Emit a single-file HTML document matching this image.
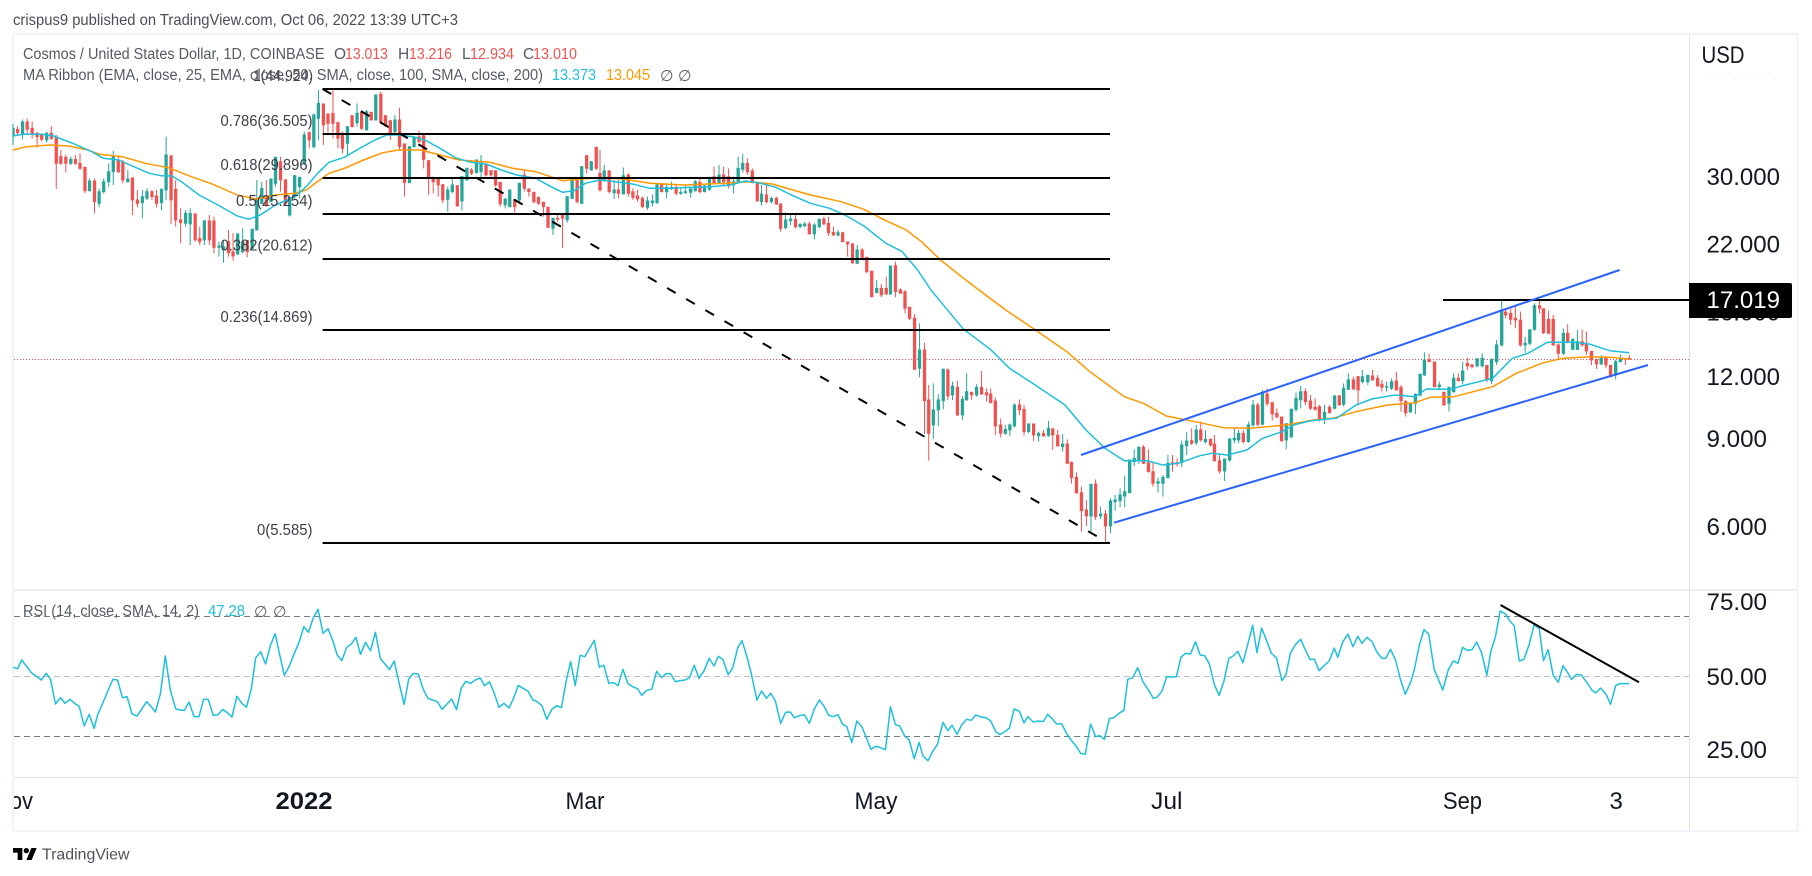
<!DOCTYPE html>
<html lang="en">
<head>
<meta charset="utf-8">
<title>Cosmos / United States Dollar chart</title>
<style>
html,body{margin:0;padding:0;background:#fff;width:1812px;height:876px;overflow:hidden}
svg{display:block}
text{font-family:"Liberation Sans",sans-serif}
.r{fill:#ef5350;stroke:#ef5350;stroke-width:2.6}
.g{fill:#26a69a;stroke:#26a69a;stroke-width:2.6}
.ln{fill:none;stroke-linejoin:round}
.rsi{fill:none;stroke:#1fbfdc;stroke-width:1.5;vector-effect:non-scaling-stroke;stroke-linejoin:round}
.fib{font-size:15.5px;fill:#3c3f47}
.leg{font-size:15.5px;fill:#555963}
.ax{font-size:24.5px;fill:#131722}
.tm{font-size:24px;fill:#131722}
</style>
</head>
<body>
<svg width="1812" height="876" viewBox="0 0 1812 876" xmlns="http://www.w3.org/2000/svg">
<defs><clipPath id="c1"><rect x="14" y="780" width="300" height="50"/></clipPath></defs>
<rect width="1812" height="876" fill="#fff"/>
<text x="13" y="25" font-size="16" fill="#4a4d55" textLength="445" lengthAdjust="spacingAndGlyphs">crispus9 published on TradingView.com, Oct 06, 2022 13:39 UTC+3</text>

<!-- frame -->
<rect x="13" y="34" width="1784.5" height="797" fill="none" stroke="#f0f3fa" stroke-width="2"/>
<path d="M14 590H1797" stroke="#e6e9f0" stroke-width="1.6"/>
<path d="M14 777.5H1797" stroke="#e0e3eb" stroke-width="1.2"/>
<path d="M1689.5 35V830" stroke="#e0e3eb" stroke-width="1"/>
<path d="M1708 73H1777" stroke="#f0f3fa" stroke-dasharray="3 7"/>

<!-- last price -->
<path d="M14 359.5H1689" stroke="#ef5350" stroke-dasharray="1 2" stroke-width="1"/>

<!-- candles A -->
<g transform="scale(.3827 .3333)">
<path class="r" d="M46 378V405M46 388h3V398h-6V388zM71 355V400M71 366h3V388h-6V366zM84 365V415M84 385h3V402h-6V385zM97 395V442M97 400h3V410h-6V400zM109 400V425M109 405h3V418h-6V405zM134 378V420M134 400h3V415h-6V400zM147 405V567M147 412h3V490h-6V412zM159 450V495M159 470h3V490h-6V470zM172 465V518M172 472h3V490h-6V472zM197 465V495M197 478h3V490h-6V478zM209 460V510M209 490h3V505h-6V490zM222 500V580M222 502h3V572h-6V502zM247 535V640M247 543h3V605h-6V543zM309 468V520M309 482h3V515h-6V482zM321 480V550M321 485h3V540h-6V485zM346 532V645M346 534h3V600h-6V534zM359 570V622M359 600h3V610h-6V600zM397 570V600M397 575h3V590h-6V575zM409 570V622M409 588h3V610h-6V588zM447 465V672M447 468h3V600h-6V468zM459 540V680M459 568h3V660h-6V568zM472 625V730M472 660h3V668h-6V660zM510 640V725M510 642h3V720h-6V642zM522 680V735M522 715h3V725h-6V715zM547 645V735M547 663h3V720h-6V663zM559 650V760M559 663h3V742h-6V663zM597 690V770M597 725h3V758h-6V725zM609 700V782M609 755h3V768h-6V755zM646 720V772M646 722h3V755h-6V722zM696 540V620M696 590h3V615h-6V590zM733 470V575M733 485h3V540h-6V485zM746 537V615M746 540h3V610h-6V540zM808 395V445M808 398h3V420h-6V398zM845 310V435M845 312h3V375h-6V312zM857 340V398M857 342h3V370h-6V342zM870 268V415M870 340h3V370h-6V340zM883 365V445M883 368h3V415h-6V368zM895 395V460M895 400h3V445h-6V400zM920 345V382M920 347h3V380h-6V347zM945 335V390M945 337h3V385h-6V337zM970 335V362M970 337h3V360h-6V337zM995 275V367M995 283h3V365h-6V283zM1007 345V380M1007 347h3V378h-6V347zM1020 360V420M1020 362h3V405h-6V362zM1044 323V450M1044 360h3V440h-6V360zM1057 430V590M1057 432h3V548h-6V432zM1095 392V428M1095 410h3V425h-6V410zM1107 405V505M1107 407h3V478h-6V407zM1120 480V585M1120 482h3V530h-6V482zM1132 530V580M1132 532h3V545h-6V532zM1145 535V590M1145 537h3V555h-6V537zM1157 552V610M1157 554h3V600h-6V554zM1195 555V620M1195 557h3V618h-6V557zM1232 505V525M1232 510h3V520h-6V510zM1270 490V530M1270 492h3V525h-6V492zM1283 510V530M1283 512h3V525h-6V512zM1295 510V560M1295 512h3V555h-6V512zM1307 545V620M1307 547h3V612h-6V547zM1345 597V638M1345 599h3V620h-6V599zM1370 510V575M1370 525h3V565h-6V525zM1382 565V590M1382 567h3V575h-6V567zM1395 575V610M1395 577h3V605h-6V577zM1407 590V615M1407 592h3V610h-6V592zM1420 605V650M1420 607h3V620h-6V607zM1432 620V685M1432 622h3V682h-6V622zM1457 640V665M1457 655h3V658h-6V655zM1470 640V745M1470 642h3V655h-6V642zM1508 535V610M1508 537h3V605h-6V537zM1533 465V520M1533 467h3V505h-6V467zM1558 440V510M1558 442h3V505h-6V442z"/>
<path class="g" d="M34 372V435M34 385h3V408h-3V385zM59 358V418M59 366h3V400h-6V366zM122 395V428M122 400h3V420h-6V400zM185 470V495M185 478h3V490h-6V478zM234 535V575M234 543h3V572h-6V543zM259 565V622M259 575h3V610h-6V575zM271 535V580M271 545h3V575h-6V545zM284 490V560M284 515h3V545h-6V515zM296 452V555M296 470h3V515h-6V470zM334 510V548M334 537h3V545h-6V537zM372 570V655M372 590h3V608h-6V590zM384 565V600M384 575h3V595h-6V575zM422 565V630M422 568h3V608h-6V568zM434 410V600M434 465h3V570h-6V465zM485 630V680M485 640h3V670h-6V640zM497 625V735M497 640h3V672h-6V640zM534 660V735M534 663h3V720h-6V663zM572 725V770M572 738h3V742h-6V738zM584 720V788M584 740h3V750h-6V740zM621 700V765M621 702h3V762h-6V702zM634 685V760M634 725h3V755h-6V725zM659 685V750M659 688h3V745h-6V688zM671 540V692M671 595h3V690h-6V595zM684 545V612M684 565h3V610h-6V565zM708 535V607M708 537h3V605h-6V537zM720 470V560M720 472h3V550h-6V472zM757 590V650M757 592h3V645h-6V592zM770 525V600M770 527h3V590h-6V527zM783 530V595M783 532h3V560h-6V532zM795 395V495M795 405h3V490h-6V405zM820 340V445M820 345h3V440h-6V345zM832 270V420M832 310h3V355h-6V310zM908 378V465M908 380h3V430h-6V380zM933 310V380M933 340h3V368h-6V340zM958 330V392M958 335h3V390h-6V335zM982 283V362M982 285h3V360h-6V285zM1032 345V400M1032 360h3V395h-6V360zM1070 438V550M1070 440h3V548h-6V440zM1082 410V442M1082 412h3V440h-6V412zM1170 560V635M1170 570h3V598h-6V570zM1182 535V580M1182 555h3V575h-6V555zM1207 528V632M1207 530h3V603h-6V530zM1220 503V542M1220 505h3V540h-6V505zM1245 478V520M1245 480h3V518h-6V480zM1257 465V535M1257 490h3V515h-6V490zM1320 595V625M1320 597h3V615h-6V597zM1332 568V622M1332 570h3V620h-6V570zM1357 548V605M1357 550h3V600h-6V550zM1445 653V705M1445 655h3V685h-6V655zM1482 588V668M1482 590h3V660h-6V590zM1495 533V597M1495 535h3V595h-6V535zM1520 498V612M1520 500h3V610h-6V500zM1545 483V512M1545 485h3V510h-6V485z"/>
</g>
<!-- candles B -->
<g transform="translate(600 0) scale(.3827 .3333)">
<path class="r" d="M0 450V575M0 520h3V570h-6V520zM24 510V580M24 513h3V575h-6V513zM48 540V595M48 570h3V580h-6V570zM74 520V590M74 525h3V580h-6V525zM86 565V600M86 575h3V592h-6V575zM98 570V605M98 588h3V597h-6V588zM111 590V625M111 595h3V620h-6V595zM161 552V577M161 555h3V575h-6V555zM199 555V587M199 562h3V580h-6V562zM261 530V580M261 547h3V575h-6V547zM298 500V550M298 530h3V548h-6V530zM323 500V555M323 525h3V545h-6V525zM336 505V565M336 530h3V557h-6V530zM385 475V525M385 490h3V515h-6V490zM398 505V550M398 513h3V548h-6V513zM411 545V605M411 547h3V603h-6V547zM435 552V610M435 585h3V605h-6V585zM461 590V615M461 595h3V612h-6V595zM472 610V695M472 612h3V685h-6V612zM511 645V685M511 658h3V680h-6V658zM547 665V703M547 672h3V702h-6V672zM585 650V675M585 657h3V672h-6V657zM597 650V708M597 670h3V698h-6V670zM610 680V708M610 697h3V705h-6V697zM634 695V727M634 698h3V725h-6V698zM647 725V770M647 726h3V732h-6V726zM660 730V793M660 732h3V788h-6V732zM685 745V775M685 750h3V772h-6V750zM697 770V820M697 772h3V815h-6V772zM710 812V892M710 814h3V890h-6V814zM735 852V892M735 865h3V885h-6V865zM748 830V885M748 865h3V882h-6V865zM772 785V892M772 797h3V875h-6V797zM785 865V880M785 870h3V880h-6V870z"/>
<path class="g" d="M11 495V545M11 513h3V540h-6V513zM37 540V597M37 570h3V578h-6V570zM61 502V584M61 527h3V582h-6V527zM124 590V630M124 603h3V622h-6V603zM137 583V620M137 603h3V608h-6V603zM149 550V612M149 555h3V608h-6V555zM174 555V595M174 562h3V575h-6V562zM187 545V570M187 562h3V566h-6V562zM211 565V585M211 577h3V580h-6V577zM223 555V582M223 575h3V578h-6V575zM237 560V593M237 567h3V577h-6V567zM249 540V575M249 545h3V572h-6V545zM273 555V577M273 558h3V575h-6V558zM286 530V572M286 532h3V568h-6V532zM311 495V552M311 525h3V548h-6V525zM349 530V580M349 545h3V555h-6V545zM361 470V550M361 505h3V548h-6V505zM373 462V518M373 490h3V508h-6V490zM422 555V617M422 582h3V605h-6V582zM448 590V610M448 595h3V605h-6V595zM485 637V687M485 660h3V683h-6V660zM498 645V675M498 657h3V662h-6V657zM523 670V685M523 673h3V680h-6V673zM535 665V682M535 672h3V677h-6V672zM560 670V718M560 675h3V702h-6V675zM573 655V685M573 658h3V680h-6V658zM622 690V710M622 698h3V705h-6V698zM672 735V792M672 750h3V790h-6V750zM723 840V880M723 865h3V878h-6V865zM759 797V885M759 798h3V882h-6V798z"/>
</g>
<!-- candles C -->
<g transform="translate(600 290) scale(.3827 .3333)">
<path class="r" d="M797 0V70M797 5h3V55h-6V5zM809 50V90M809 52h3V85h-6V52zM822 72V240M822 84h3V238h-6V84zM848 158V432M848 180h3V332h-6V180zM859 285V512M859 330h3V430h-6V330zM909 235V330M909 240h3V318h-6V240zM934 272V378M934 292h3V375h-6V292zM971 305V330M971 307h3V315h-6V307zM997 243V315M997 292h3V312h-6V292zM1010 295V335M1010 308h3V315h-6V308zM1021 295V340M1021 312h3V338h-6V312zM1033 322V435M1033 333h3V408h-6V333zM1047 385V443M1047 405h3V430h-6V405zM1096 328V375M1096 345h3V360h-6V345zM1108 345V437M1108 358h3V425h-6V358zM1133 400V452M1133 402h3V435h-6V402zM1159 420V440M1159 430h3V438h-6V430zM1183 415V480M1183 416h3V435h-6V416zM1196 420V470M1196 436h3V468h-6V436zM1221 448V523M1221 462h3V520h-6V462zM1232 515V580M1232 517h3V563h-6V517zM1245 547V612M1245 562h3V608h-6V562zM1258 590V725M1258 608h3V662h-6V608zM1271 630V708M1271 660h3V678h-6V660zM1295 568V690M1295 582h3V680h-6V582zM1321 660V757M1321 672h3V708h-6V672zM1420 465V522M1420 472h3V520h-6V472zM1433 478V548M1433 518h3V545h-6V518zM1445 515V590M1445 545h3V580h-6V545zM1496 495V545M1496 518h3V523h-6V518zM1508 505V530M1508 518h3V522h-6V518zM1546 415V465M1546 452h3V460h-6V452z"/>
<path class="g" d="M835 100V262M835 180h3V235h-6V180zM871 280V447M871 360h3V405h-6V360zM884 312V408M884 330h3V360h-6V330zM897 235V358M897 238h3V332h-6V238zM921 275V330M921 288h3V315h-6V288zM947 318V390M947 328h3V375h-6V328zM958 250V332M958 305h3V330h-6V305zM984 283V320M984 292h3V315h-6V292zM1059 405V435M1059 418h3V430h-6V418zM1071 400V438M1071 405h3V420h-6V405zM1083 340V412M1083 345h3V408h-6V345zM1120 400V430M1120 402h3V425h-6V402zM1146 425V455M1146 430h3V437h-6V430zM1172 393V440M1172 415h3V437h-6V415zM1209 432V485M1209 462h3V470h-6V462zM1283 582V725M1283 583h3V678h-6V583zM1308 650V688M1308 672h3V678h-6V672zM1334 625V730M1334 633h3V708h-6V633zM1346 615V662M1346 630h3V635h-6V630zM1359 595V652M1359 615h3V632h-6V615zM1371 558V652M1371 605h3V618h-6V605zM1384 508V610M1384 510h3V608h-6V510zM1396 478V528M1396 505h3V515h-6V505zM1408 468V522M1408 472h3V510h-6V472zM1458 562V608M1458 575h3V580h-6V575zM1471 555V620M1471 562h3V580h-6V562zM1484 495V565M1484 520h3V563h-6V520zM1520 452V532M1520 465h3V518h-6V465zM1533 427V495M1533 453h3V467h-6V453zM1558 405V465M1558 420h3V458h-6V420z"/>
</g>
<!-- candles D -->
<g transform="translate(1200 290) scale(.3903 .3333)">
<path class="r" d="M2 395V455M2 420h3V450h-6V420zM27 445V470M27 448h3V465h-6V448zM37 435V515M37 462h3V512h-6V462zM50 490V550M50 512h3V543h-6V512zM111 420V460M111 430h3V455h-6V430zM148 338V408M148 345h3V403h-6V345zM172 295V348M172 312h3V340h-6V312zM185 335V392M185 338h3V372h-6V338zM197 355V385M197 370h3V380h-6V370zM209 380V455M209 381h3V452h-6V381zM270 295V345M270 305h3V335h-6V305zM283 315V360M283 333h3V355h-6V333zM295 325V362M295 352h3V358h-6V352zM306 345V395M306 350h3V390h-6V350zM332 345V370M332 352h3V368h-6V352zM357 315V347M357 318h3V345h-6V318zM393 260V300M393 270h3V297h-6V270zM405 258V343M405 260h3V300h-6V260zM442 240V272M442 258h3V270h-6V258zM455 255V290M455 265h3V288h-6V265zM466 270V305M466 283h3V292h-6V283zM503 245V302M503 273h3V300h-6V273zM515 285V365M515 292h3V332h-6V292zM527 330V380M527 335h3V368h-6V335zM587 190V217M587 210h3V215h-6V210zM601 215V292M601 216h3V290h-6V216zM625 305V348M625 307h3V345h-6V307zM662 250V275M662 265h3V272h-6V265zM685 203V240M685 220h3V228h-6V220zM697 222V235M697 225h3V230h-6V225zM735 225V275M735 226h3V270h-6V226zM783 55V85M783 66h3V75h-6V66zM796 55V105M796 70h3V88h-6V70zM808 50V115M808 85h3V90h-6V85zM821 65V170M821 90h3V165h-6V90zM870 32V70M870 47h3V55h-6V47zM880 55V132M880 56h3V128h-6V56zM893 62V132M893 88h3V130h-6V88zM905 75V168M905 88h3V165h-6V88zM918 160V210M918 165h3V190h-6V165zM942 103V160M942 130h3V155h-6V130zM979 118V170M979 155h3V165h-6V155zM990 125V195M990 160h3V183h-6V160zM1003 183V225M1003 184h3V210h-6V184zM1016 205V237M1016 210h3V222h-6V210zM1040 200V235M1040 203h3V225h-6V203zM1052 225V262M1052 226h3V260h-6V226zM1090 205V225M1090 205h3V208h-6V205zM1100 195V210M1100 205h3V207h-6V205z"/>
<path class="g" d="M14 420V460M14 448h3V455h-6V448zM63 505V573M63 507h3V543h-6V507zM76 445V515M76 447h3V510h-6V447zM88 412V460M88 445h3V450h-6V445zM99 420V460M99 430h3V450h-6V430zM124 395V458M124 405h3V455h-6V405zM136 330V410M136 345h3V405h-6V345zM160 300V405M160 308h3V403h-6V308zM221 400V478M221 401h3V450h-6V401zM234 355V445M234 358h3V440h-6V358zM246 308V365M246 325h3V358h-6V325zM258 288V355M258 305h3V330h-6V305zM319 345V402M319 367h3V388h-6V367zM345 315V358M345 318h3V355h-6V318zM368 280V350M368 295h3V343h-6V295zM380 250V300M380 270h3V298h-6V270zM416 240V280M416 260h3V275h-6V260zM430 255V285M430 256h3V275h-6V256zM478 275V305M478 290h3V292h-6V290zM491 265V300M491 275h3V295h-6V275zM539 338V368M539 339h3V366h-6V339zM552 310V372M552 313h3V340h-6V313zM564 250V320M564 253h3V315h-6V253zM575 187V258M575 210h3V255h-6V210zM613 275V300M613 285h3V290h-6V285zM638 290V365M638 292h3V340h-6V292zM650 250V308M650 265h3V305h-6V265zM673 215V283M673 243h3V272h-6V243zM710 205V232M710 206h3V228h-6V206zM723 190V232M723 205h3V228h-6V205zM747 205V283M747 208h3V272h-6V208zM760 150V225M760 165h3V215h-6V165zM773 28V170M773 60h3V165h-6V60zM833 140V188M833 160h3V165h-6V160zM845 118V165M845 119h3V160h-6V119zM857 40V122M857 47h3V118h-6V47zM931 115V195M931 130h3V190h-6V130zM955 145V180M955 148h3V178h-6V148zM967 120V180M967 155h3V178h-6V155zM1028 195V225M1028 205h3V222h-6V205zM1065 210V268M1065 215h3V255h-6V215zM1077 193V218M1077 205h3V215h-6V205z"/>
</g>

<!-- MA ribbon -->
<path class="ln" stroke="#ff9800" stroke-width="1.5" d="M13 150L26.8 146.7L49.8 145L68.9 146L88 150L99.5 154.3L122.5 156.7L145.4 163.3L168.4 167.7L191.4 176.7L210.5 183.3L237.3 195L256.4 199L275.5 195L294.7 193.3L306.2 190L329 173.3L344.4 168.3L363.6 160L382.7 152.7L398 150L421 150L440 155L459.2 160L489.9 162.3L512.8 168.3L535.8 171.7L562.6 180.7L581.7 179L600 177.7L623 179L649.8 183.3L684.2 185L726.3 183.3L749.3 181.7L772.2 184L810.5 195L841 201.7L864 209.3L883.2 219.3L906.2 230L921.5 241.7L940.6 260L963.6 278.3L978.9 290L1005.7 310L1034.4 329.3L1066.9 351.7L1089.9 371.7L1124.3 396.7L1143.4 403.3L1166.4 416L1200 422.7L1223.4 427.7L1250.7 428.3L1285.9 425L1313.2 420L1332.7 418.3L1356 411.7L1387.4 405L1414.7 402.7L1430.3 397.3L1453.7 396.7L1492.7 386.7L1516.2 373.3L1543.5 362.7L1563 358.3L1590.3 356.7L1609.8 357.3L1629.4 359"/>
<path class="ln" stroke="#1fbfdc" stroke-width="1.5" d="M13 136L23 134.3L42 134.3L53.6 136L72.7 143.3L91.8 151.7L103.3 158.3L118.6 160L130 165L149.3 173.3L160.7 175.7L172.2 176L183.7 183.3L199 195L218 205L237.3 216L248.8 219.3L260.2 215L275.5 205L294.7 196.7L306.2 186.7L317.6 173.3L329 162.3L344.4 157.3L359.7 148.3L375 140L386.5 135L398 135L413.3 136.7L424.8 140L440 148.3L455.4 157.7L470.7 162.3L486 164L501.3 170L516.6 175L535.8 178.3L551 186.7L562.6 192.3L574 190.7L585.5 183.3L600 180L615.3 181.7L632.5 184L649.8 188.3L668.9 188.3L691.8 187.3L711 186.7L730 185L745.4 181L760.7 183.3L776 187.3L791.3 195L810.5 203.3L829.6 208.3L845 215L864 226L885 242.7L902.3 251.7L917.6 270L931 290L940.6 301.7L963.6 329.3L990.4 349.3L1009.5 368.3L1032.5 383.3L1065 405L1086 430L1105 448.3L1124.3 460.7L1133.9 460.7L1147.3 460.7L1162.6 465L1178 463.3L1200 455.7L1211.7 453.3L1227.3 455L1246.8 450L1262.5 438.3L1282 431.7L1293.7 425L1309.3 421L1325 419.3L1336.6 418.3L1356 405L1371.7 399L1395 395L1414.7 396.7L1426.4 389L1449.8 389.3L1465.4 385L1492.7 378.3L1512.3 358.3L1527.9 353.3L1547.4 342.3L1574.7 342.3L1590.3 344.3L1609.8 350.7L1629.4 352.7"/>

<!-- drawings: fib -->
<g stroke="#000" stroke-width="2" fill="none">
<path d="M322.6 89H1110M322.6 134H1110M322.6 178H1110M322.6 214H1110M322.6 259H1110M322.6 330H1110M322.6 543H1110"/>
<path d="M322.6 89L1108 542.7" stroke-dasharray="10 12.1"/>
<path d="M1443 300H1689"/>
</g>
<g stroke="#2962ff" stroke-width="2" fill="none">
<path d="M1081 455L1619.6 270"/>
<path d="M1114 522.7L1648 365"/>
</g>

<!-- fib labels -->
<text class="fib" x="253" y="81" textLength="60" lengthAdjust="spacingAndGlyphs">1(44.924)</text>
<text class="fib" x="220.5" y="126" textLength="92" lengthAdjust="spacingAndGlyphs">0.786(36.505)</text>
<text class="fib" x="220.5" y="170" textLength="92" lengthAdjust="spacingAndGlyphs">0.618(29.896)</text>
<text class="fib" x="236" y="206" textLength="76.500" lengthAdjust="spacingAndGlyphs">0.5(25.254)</text>
<text class="fib" x="220.5" y="250.500" textLength="92" lengthAdjust="spacingAndGlyphs">0.382(20.612)</text>
<text class="fib" x="220.5" y="322" textLength="92" lengthAdjust="spacingAndGlyphs">0.236(14.869)</text>
<text class="fib" x="257" y="535" textLength="55.500" lengthAdjust="spacingAndGlyphs">0(5.585)</text>

<!-- legend -->
<text class="leg" x="23" y="59" textLength="301.500" lengthAdjust="spacingAndGlyphs">Cosmos / United States Dollar, 1D, COINBASE</text>
<text class="leg" x="334" y="59">O</text><text x="345" y="59" font-size="15.5" fill="#ef5350" textLength="43" lengthAdjust="spacingAndGlyphs">13.013</text>
<text class="leg" x="398" y="59">H</text><text x="409" y="59" font-size="15.5" fill="#ef5350" textLength="43" lengthAdjust="spacingAndGlyphs">13.216</text>
<text class="leg" x="462" y="59">L</text><text x="470" y="59" font-size="15.5" fill="#ef5350" textLength="44" lengthAdjust="spacingAndGlyphs">12.934</text>
<text class="leg" x="523" y="59">C</text><text x="533" y="59" font-size="15.5" fill="#ef5350" textLength="44" lengthAdjust="spacingAndGlyphs">13.010</text>
<text class="leg" x="23" y="80" textLength="520" lengthAdjust="spacingAndGlyphs">MA Ribbon (EMA, close, 25, EMA, close, 50, SMA, close, 100, SMA, close, 200)</text>
<text x="552" y="80" font-size="15.5" fill="#1fbfdc" textLength="44" lengthAdjust="spacingAndGlyphs">13.373</text>
<text x="606" y="80" font-size="15.5" fill="#ff9800" textLength="44" lengthAdjust="spacingAndGlyphs">13.045</text>
<text class="leg" x="660" y="81">∅</text><text class="leg" x="678" y="81">∅</text>

<!-- RSI -->
<path d="M14 616.5H1689M14 736.5H1689" stroke="#787b86" stroke-dasharray="6 4" stroke-width="1"/>
<path d="M14 676.5H1689" stroke="#bcbec4" stroke-dasharray="6 4" stroke-width="1"/>
<g transform="translate(0 590) scale(.3827 .3333)">
<polyline class="rsi" points="34,232 46,236 57,210 70,230 82,248 96,260 108,270 121,250 132,268 145,342 158,323 170,340 183,328 195,340 207,349 220,408 233,373 246,415 255,375 270,335 283,300 295,268 307,270 320,323 332,320 345,372 358,378 370,358 383,335 395,350 406,366 419,312 432,198 445,300 459,356 470,360 482,361 494,336 507,380 520,380 532,328 544,328 557,376 570,374 582,358 594,368 606,381 619,319 632,340 644,352 657,295 668,204 681,185 694,222 707,165 719,131 731,195 743,256 756,228 768,193 781,158 794,110 806,127 818,85 831,58 844,130 857,116 869,150 881,195 893,212 906,172 918,162 930,142 942,193 955,157 968,182 981,127 994,206 1006,222 1018,239 1030,213 1043,280 1056,343 1068,267 1080,250 1093,252 1106,298 1118,325 1130,330 1143,335 1155,358 1168,342 1180,327 1193,359 1205,295 1217,274 1230,280 1242,270 1255,264 1266,287 1279,276 1291,308 1304,352 1317,340 1330,354 1342,325 1354,286 1367,295 1380,304 1392,329 1404,335 1416,347 1429,388 1442,358 1455,347 1467,353 1480,270 1491,215 1503,287 1516,196 1528,200 1553,151 1566,232 1568,230"/>
</g>
<g transform="translate(600 590) scale(.3827 .3333)">
<polyline class="rsi" points="0,230 10,226 23,280 35,278 47,287 60,238 73,281 85,290 98,296 109,316 122,301 135,298 148,244 161,263 172,251 184,251 197,275 210,272 222,270 234,263 246,226 259,265 272,242 285,205 298,228 309,199 321,208 335,254 347,233 360,173 371,152 384,200 395,250 410,330 422,303 435,325 446,310 458,332 472,400 485,367 497,366 508,383 521,377 534,374 547,400 560,357 573,330 585,348 597,375 609,380 622,374 634,403 645,410 658,458 671,393 684,410 695,440 708,478 721,469 733,473 746,479 759,350 772,404 783,408 796,438 808,450 821,506 834,457 844,498 857,512 870,483 882,463 896,397 909,422 920,406 933,433 946,403 958,388 970,391 982,375 995,381 1008,383 1021,393 1034,425 1045,434 1058,425 1070,414 1082,357 1096,364 1108,399 1118,380 1132,396 1145,393 1158,395 1170,373 1182,387 1193,402 1206,401 1219,430 1232,452 1245,470 1256,490 1268,493 1282,402 1295,440 1306,437 1318,448 1331,386 1343,383 1356,370 1369,361 1379,268 1392,263 1405,233 1419,276 1432,298 1446,325 1455,322 1468,304 1481,260 1494,261 1506,260 1518,202 1530,190 1543,192 1556,155 1568,195"/>
</g>
<g transform="translate(1200 590) scale(.3903 .3333)">
<polyline class="rsi" points="0,195 12,197 24,222 37,285 49,316 61,275 74,205 85,198 97,184 110,218 122,165 135,106 146,188 158,114 170,150 183,190 196,204 210,272 220,255 232,188 245,163 258,148 270,180 282,209 293,207 305,242 317,228 331,213 344,174 353,202 366,155 379,133 392,170 404,139 415,160 428,142 441,155 453,186 466,205 476,205 488,178 501,210 514,270 526,313 540,275 549,240 562,165 574,119 586,133 600,238 622,300 636,240 649,213 661,220 673,172 685,181 697,179 709,156 722,190 735,256 745,185 757,140 769,63 783,72 795,95 805,107 818,213 830,208 843,165 856,105 869,115 880,212 892,179 905,256 918,277 930,227 942,248 952,268 965,253 977,255 990,276 1004,300 1014,309 1026,294 1040,312 1052,343 1065,287 1075,281 1100,281"/>
</g>
<path d="M1500.5 605L1639 682.3" stroke="#000" stroke-width="2" fill="none"/>
<text class="leg" x="23" y="616" textLength="176" lengthAdjust="spacingAndGlyphs">RSI (14, close, SMA, 14, 2)</text>
<text x="208" y="616" font-size="15.5" fill="#1fbfdc" textLength="37" lengthAdjust="spacingAndGlyphs">47.28</text>
<text class="leg" x="254" y="617">∅</text><text class="leg" x="273" y="617">∅</text>

<!-- price axis -->
<text class="ax" x="1701.5" y="63" textLength="43" lengthAdjust="spacingAndGlyphs">USD</text>
<text class="ax" x="1706.5" y="185" textLength="73.500" lengthAdjust="spacingAndGlyphs">30.000</text>
<text class="ax" x="1706.5" y="252.500" textLength="73.500" lengthAdjust="spacingAndGlyphs">22.000</text>
<text class="ax" x="1706.5" y="320.500" textLength="73.500" lengthAdjust="spacingAndGlyphs">16.000</text>
<path d="M1689 283H1790a2 2 0 0 1 2 2V316a2 2 0 0 1-2 2H1689z" fill="#000"/>
<text x="1706.5" y="308" font-size="24.5" fill="#fff" textLength="73.500" lengthAdjust="spacingAndGlyphs">17.019</text>
<text class="ax" x="1706.5" y="385" textLength="73.500" lengthAdjust="spacingAndGlyphs">12.000</text>
<text class="ax" x="1706.5" y="447" textLength="60.500" lengthAdjust="spacingAndGlyphs">9.000</text>
<text class="ax" x="1706.5" y="535" textLength="60.500" lengthAdjust="spacingAndGlyphs">6.000</text>
<text class="ax" x="1706.5" y="610" textLength="60.500" lengthAdjust="spacingAndGlyphs">75.00</text>
<text class="ax" x="1706.5" y="685" textLength="60.500" lengthAdjust="spacingAndGlyphs">50.00</text>
<text class="ax" x="1706.5" y="758" textLength="60.500" lengthAdjust="spacingAndGlyphs">25.00</text>

<!-- time axis -->
<g clip-path="url(#c1)"><text class="tm" x="-6" y="809" textLength="39" lengthAdjust="spacingAndGlyphs">Nov</text></g>
<text class="tm" x="275.5" y="809" font-weight="700" textLength="57" lengthAdjust="spacingAndGlyphs">2022</text>
<text class="tm" x="565.5" y="809" textLength="39" lengthAdjust="spacingAndGlyphs">Mar</text>
<text class="tm" x="854.5" y="809" textLength="43" lengthAdjust="spacingAndGlyphs">May</text>
<text class="tm" x="1151" y="809" textLength="31.500" lengthAdjust="spacingAndGlyphs">Jul</text>
<text class="tm" x="1443" y="809" textLength="39" lengthAdjust="spacingAndGlyphs">Sep</text>
<text class="tm" x="1609.5" y="809">3</text>

<!-- footer -->
<g transform="translate(13 845.3) scale(.667)" fill="#000">
<path d="M14 22H7V11H0V4h14v18zM28 22h-8l7.500-18h8L28 22z"/><circle cx="20" cy="8" r="4"/>
</g>
<text x="42" y="859.5" font-size="16" fill="#50535e" textLength="87.500" lengthAdjust="spacingAndGlyphs">TradingView</text>
</svg>
</body>
</html>
